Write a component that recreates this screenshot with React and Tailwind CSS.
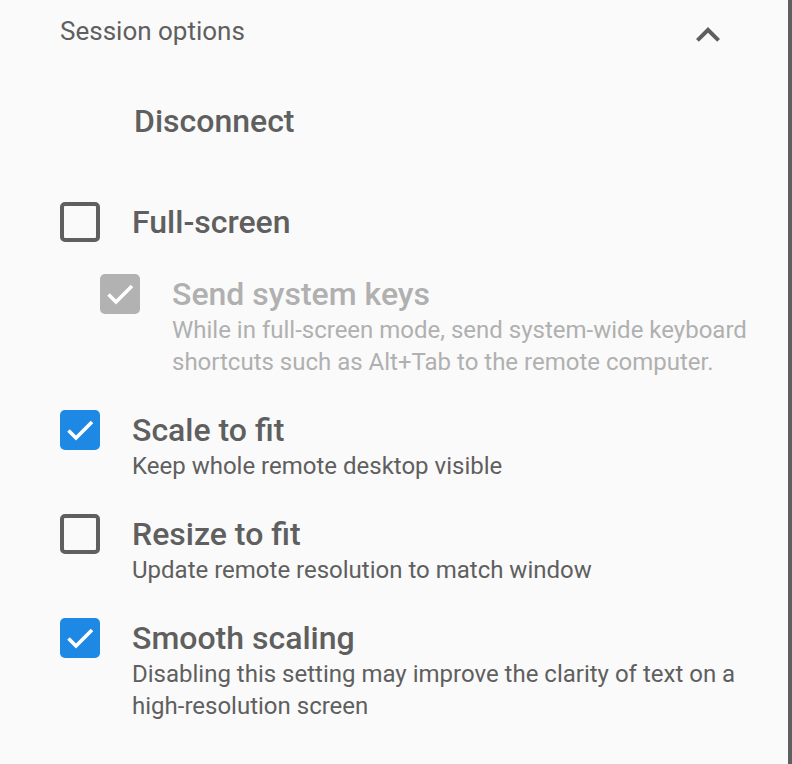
import React, { useState } from 'react';

const font = { fontFamily: 'Roboto, "Noto Sans", Arial, sans-serif' };

const Check = ({ checked, disabled }) => {
  if (!checked) {
    return <div className="w-[40px] h-[40px] shrink-0 rounded-[5px] border-[4px] border-[#5f5f5f] box-border" />;
  }
  return (
    <div className={`w-[40px] h-[40px] shrink-0 rounded-[5px] flex items-center justify-center ${disabled ? 'bg-[#b2b2b2]' : 'bg-[#1e88e5]'}`}>
      <svg width="40" height="40" viewBox="0 0 40 40" fill="none">
        <path d="M8.5 20.5l7.5 7.5 16-16" stroke="white" strokeWidth="3.6" />
      </svg>
    </div>
  );
};

const Option = ({ label, desc, checked, disabled, nested }) => (
  <div className={`flex gap-[32px] ${nested ? 'pl-[100px]' : 'pl-[60px]'}`}>
    <Check checked={checked} disabled={disabled} />
    <div className="flex flex-col flex-1 pr-[28px]">
      <div className={`text-[32px] leading-[40px] font-medium ${disabled ? 'text-[#b0b0b0]' : 'text-[#5f5f5f]'}`}>{label}</div>
      {desc && (
        <div className={`text-[24px] leading-[32px] ${disabled ? 'text-[#b0b0b0]' : 'text-[#5f5f5f]'}`}>{desc}</div>
      )}
    </div>
  </div>
);

export default function App() {
  const [open] = useState(true);
  return (
    <div style={font} className="w-[792px] h-[764px] bg-[#fafafa] flex overflow-hidden">
      <div className="flex-1 flex flex-col">
        <div className="flex items-center justify-between pl-[60px] pr-[56px] h-[62px]">
          <span className="text-[26px] text-[#5f5f5f]">Session options</span>
          <svg width="48" height="48" viewBox="0 0 24 24" className="mt-[8px]">
            <path d="M12 8l-6 6 1.41 1.41L12 10.83l4.59 4.58L18 14z" fill="#5f5f5f" />
          </svg>
        </div>
        {open && (
          <>
            <div className="pl-[134px] mt-[39px] text-[32px] leading-[40px] font-medium text-[#5f5f5f]">Disconnect</div>
            <div className="flex flex-col gap-[32px] mt-[61px]">
              <Option label="Full-screen" />
              <Option
                nested
                checked
                disabled
                label="Send system keys"
                desc="While in full-screen mode, send system-wide keyboard shortcuts such as Alt+Tab to the remote computer."
              />
              <Option checked label="Scale to fit" desc="Keep whole remote desktop visible" />
              <Option label="Resize to fit" desc="Update remote resolution to match window" />
              <Option
                checked
                label="Smooth scaling"
                desc="Disabling this setting may improve the clarity of text on a high-resolution screen"
              />
            </div>
          </>
        )}
      </div>
      <div className="w-[4px] h-full bg-[#5f5f5f]" />
    </div>
  );
}
